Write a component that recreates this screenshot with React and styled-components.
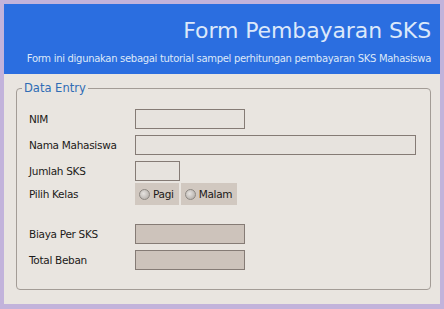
import React from "react";
import styled, { createGlobalStyle } from "styled-components";

const GlobalStyle = createGlobalStyle`
  html, body {
    margin: 0;
    padding: 0;
    background: #c2b3db;
  }
  * {
    box-sizing: border-box;
  }
`;

const Frame = styled.div`
  width: 444px;
  height: 309px;
  padding: 4px 4px 5px 4px;
  background: #c2b3db;
  font-family: "DejaVu Sans", "Liberation Sans", sans-serif;
`;

const Window = styled.div`
  height: 100%;
  display: flex;
  flex-direction: column;
  background: #e9e5e0;
`;

const Header = styled.header`
  height: 70px;
  background: #2b6ee0;
  display: flex;
  flex-direction: column;
  align-items: flex-end;
  padding: 12px 9px 0 0;
`;

const Title = styled.h1`
  margin: 0;
  font-weight: normal;
  font-size: 22px;
  line-height: 30px;
  color: #dbe8fa;
  letter-spacing: -0.1px;
`;

const Subtitle = styled.p`
  margin: 6px 0 0;
  font-size: 10px;
  line-height: 14px;
  color: #dde8f8;
  letter-spacing: -0.3px;
`;

const Body = styled.div`
  flex: 1;
  padding: 7px 9px 0 12px;
`;

const Fieldset = styled.fieldset`
  margin: 0;
  height: 209px;
  border: 1px solid #a39c96;
  border-radius: 4px;
  padding: 14px 12px 0 12px;
  display: flex;
  flex-direction: column;
`;

const Legend = styled.legend`
  margin-left: -7px;
  padding: 0 2px;
  font-size: 11.5px;
  color: #2f6cb5;
`;

const Row = styled.div`
  display: flex;
  align-items: center;
  height: ${(p) => p.$h || 20}px;
  margin-top: ${(p) => p.$gap || 0}px;
`;

const Label = styled.label`
  width: 106px;
  font-size: 10.5px;
  color: #1c1a18;
  letter-spacing: -0.3px;
`;

const Input = styled.div`
  width: ${(p) => p.$w}px;
  height: 20px;
  border: 1px solid #857b75;
  background: ${(p) => (p.$disabled ? "#cdc3bb" : "#e7e3de")};
`;

const RadioGroup = styled.div`
  display: flex;
  gap: 2px;
  height: 22px;
`;

const RadioOption = styled.label`
  display: flex;
  align-items: center;
  gap: 3px;
  padding: 0 5px 0 4px;
  background: #d1c8c0;
  font-size: 10.5px;
  color: #1c1a18;
  letter-spacing: -0.3px;
`;

const RadioDot = styled.span`
  width: 11px;
  height: 11px;
  border-radius: 50%;
  border: 1px solid #8d8883;
  background: radial-gradient(circle at 40% 40%, #e6e3e0 0%, #b9b4af 75%);
`;

function Radio({ label }) {
  return (
    <RadioOption>
      <RadioDot />
      {label}
    </RadioOption>
  );
}

export default function App() {
  return (
    <Frame>
      <GlobalStyle />
      <Window>
        <Header>
          <Title>Form Pembayaran SKS</Title>
          <Subtitle>
            Form ini digunakan sebagai tutorial sampel perhitungan pembayaran SKS Mahasiswa
          </Subtitle>
        </Header>
        <Body>
          <Fieldset>
            <Legend>Data Entry</Legend>
            <Row>
              <Label>NIM</Label>
              <Input $w={110} />
            </Row>
            <Row $gap={6}>
              <Label>Nama Mahasiswa</Label>
              <Input $w={281} />
            </Row>
            <Row $gap={6}>
              <Label>Jumlah SKS</Label>
              <Input $w={45} />
            </Row>
            <Row $gap={2} $h={22}>
              <Label>Pilih Kelas</Label>
              <RadioGroup>
                <Radio label="Pagi" />
                <Radio label="Malam" />
              </RadioGroup>
            </Row>
            <Row $gap={19}>
              <Label>Biaya Per SKS</Label>
              <Input $w={110} $disabled />
            </Row>
            <Row $gap={6}>
              <Label>Total Beban</Label>
              <Input $w={110} $disabled />
            </Row>
          </Fieldset>
        </Body>
      </Window>
    </Frame>
  );
}
